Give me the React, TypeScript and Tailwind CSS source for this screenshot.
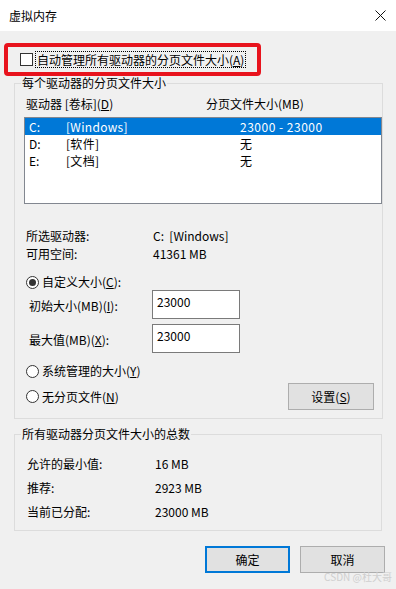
import React from "react";

const font = "font-['Noto_Sans_CJK_SC','Noto_Sans',sans-serif]";

function Radio({ checked, label, ukey, colon }: { checked?: boolean; label: string; ukey: string; colon?: boolean }) {
  return (
    <div className="flex h-[16px] items-center">
      <span className="flex h-[13px] w-[13px] items-center justify-center rounded-full border border-[#333] bg-white">
        {checked ? <span className="h-[7px] w-[7px] rounded-full bg-[#333]" /> : null}
      </span>
      <span className="ml-[3px] leading-[16px]">
        {label}(<span className="underline">{ukey}</span>){colon ? ":" : ""}
      </span>
    </div>
  );
}

function Field({ label, ukey, value }: { label: string; ukey: string; value: string }) {
  return (
    <div className="flex h-[29px] items-center">
      <div className="w-[126px] pl-[3px] pt-[3px] leading-[16px]">
        {label}(<span className="underline">{ukey}</span>):
      </div>
      <div className="h-[29px] w-[88px] border border-[#7a7a7a] bg-white pl-[4px] pt-[3px] leading-[16px]">
        {value}
      </div>
    </div>
  );
}

const drives = [
  { d: "C:", label: "[Windows]", size: "23000 - 23000", selected: true },
  { d: "D:", label: "[软件]", size: "无" },
  { d: "E:", label: "[文档]", size: "无" },
];

export default function App() {
  return (
    <div className={`relative h-[589px] w-[396px] overflow-hidden bg-[#f0f0f0] text-[12px] text-black ${font}`}>
      {/* title bar */}
      <div className="flex h-[31px] items-center justify-between bg-white pl-[9px] pr-[10px]">
        <span className="leading-[16px]">虚拟内存</span>
        <svg width="11" height="11" viewBox="0 0 11 11">
          <path d="M0.5 0.5 L10.5 10.5 M10.5 0.5 L0.5 10.5" stroke="#111" strokeWidth="1" />
        </svg>
      </div>

      {/* auto manage checkbox, highlighted */}
      <div className="ml-[4px] mt-[12px] flex h-[33px] w-[257px] items-center rounded-[4px] border-[4px] border-[#e8131d] pl-[12px]">
        <span className="h-[13px] w-[13px] border border-[#333] bg-white" />
        <span className="ml-[2px] border border-dotted border-black px-[1px] leading-[15px]">
          自动管理所有驱动器的分页文件大小(<span className="underline">A</span>)
        </span>
      </div>

      {/* per drive */}
      <fieldset className="ml-[14px] w-[368px] border border-[#dcdcdc] pb-[8px]">
        <legend className="ml-[6px] px-[1px] leading-[14px]">每个驱动器的分页文件大小</legend>
        <div className="mt-[6px] flex h-[16px] pl-[11px] leading-[16px]">
          <span className="w-[180px]">
            驱动器 [卷标](<span className="underline">D</span>)
          </span>
          <span>分页文件大小(MB)</span>
        </div>
        <div className="ml-[9px] mt-[5px] h-[87px] w-[358px] border border-[#828790] bg-white">
          {drives.map((r) => (
            <div
              key={r.d}
              className={`flex h-[17px] items-center pl-[4px] leading-[17px] ${r.selected ? "bg-[#0078d7] text-white" : ""}`}
            >
              <span className="w-[37px]">{r.d}</span>
              <span className="w-[174px] tracking-[0.3px]">{r.label}</span>
              <span className="tracking-[0.5px] whitespace-pre">{r.size}</span>
            </div>
          ))}
        </div>

        <div className="mt-[23px] pl-[11px] leading-[18px]">
          <div className="flex h-[18px]">
            <span className="w-[127px]">所选驱动器:</span>
            <span className="whitespace-pre">C:  [Windows]</span>
          </div>
          <div className="flex h-[18px]">
            <span className="w-[127px]">可用空间:</span>
            <span>41361 MB</span>
          </div>
        </div>

        <div className="mt-[11px] pl-[11px]">
          <Radio checked label="自定义大小" ukey="C" colon />
          <Field label="初始大小(MB)" ukey="I" value="23000" />
          <div className="mt-[5px]">
            <Field label="最大值(MB)" ukey="X" value="23000" />
          </div>
          <div className="mt-[10px]">
            <Radio label="系统管理的大小" ukey="Y" />
          </div>
          <div className="mt-[4px] flex items-center justify-between pr-[8px]">
            <Radio label="无分页文件" ukey="N" />
            <button className="h-[27px] w-[86px] border border-[#adadad] bg-[#e1e1e1] leading-[16px]">
              设置(<span className="underline">S</span>)
            </button>
          </div>
        </div>
      </fieldset>

      {/* totals */}
      <fieldset className="ml-[14px] mt-[8px] w-[368px] border border-[#dcdcdc] pb-[6px]">
        <legend className="ml-[6px] px-[1px] leading-[14px]">所有驱动器分页文件大小的总数</legend>
        <div className="mt-[11px] pl-[12px] leading-[24px]">
          {[
            ["允许的最小值:", "16 MB"],
            ["推荐:", "2923 MB"],
            ["当前已分配:", "23000 MB"],
          ].map(([k, v]) => (
            <div key={k} className="flex h-[24px]">
              <span className="w-[128px]">{k}</span>
              <span>{v}</span>
            </div>
          ))}
        </div>
      </fieldset>

      <div className="mt-[15px] flex justify-end gap-[10px] pr-[11px]">
        <button className="h-[27px] w-[85px] border-2 border-[#0078d7] bg-[#e1e1e1] leading-[16px]">确定</button>
        <button className="h-[27px] w-[85px] border border-[#adadad] bg-[#e1e1e1] leading-[16px]">取消</button>
      </div>

      <span className="absolute right-[4px] top-[571px] text-[10px] leading-[12px] text-[#cfcfcf]">CSDN @杜大哥</span>
    </div>
  );
}
